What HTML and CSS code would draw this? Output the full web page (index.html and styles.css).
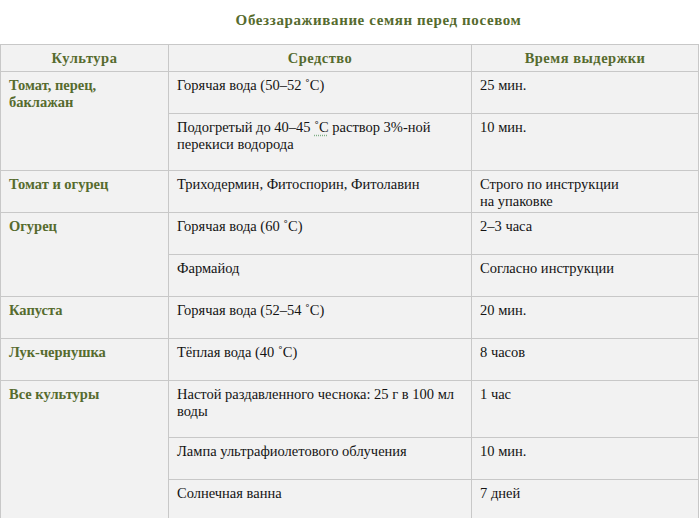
FILE: index.html
```html
<!DOCTYPE html>
<html lang="ru">
<head>
<meta charset="utf-8">
<title>Обеззараживание семян перед посевом</title>
<link rel="stylesheet" href="styles.css">
</head>
<body>
<h1 class="title">Обеззараживание семян перед посевом</h1>
<table class="tbl">
  <colgroup>
    <col class="c1"><col class="c2"><col class="c3">
  </colgroup>
  <thead>
    <tr><th>Культура</th><th>Средство</th><th>Время выдержки</th></tr>
  </thead>
  <tbody>
    <tr><td class="crop" rowspan="2">Томат, перец,<br>баклажан</td><td>Горячая вода (50–52 ˚С)</td><td>25 мин.</td></tr>
    <tr class="tall"><td>Подогретый до 40–45 <span class="spell">˚С</span> раствор 3%-ной<br>перекиси водорода</td><td>10 мин.</td></tr>
    <tr><td class="crop">Томат и огурец</td><td>Триходермин, Фитоспорин, Фитолавин</td><td>Строго по инструкции<br>на упаковке</td></tr>
    <tr><td class="crop" rowspan="2">Огурец</td><td>Горячая вода (60 ˚С)</td><td>2–3 часа</td></tr>
    <tr><td>Фармайод</td><td>Согласно инструкции</td></tr>
    <tr><td class="crop">Капуста</td><td>Горячая вода (52–54 ˚С)</td><td>20 мин.</td></tr>
    <tr><td class="crop">Лук-чернушка</td><td>Тёплая вода (40 ˚С)</td><td>8 часов</td></tr>
    <tr class="tall"><td class="crop" rowspan="3">Все культуры</td><td>Настой раздавленного чеснока: 25 г в 100 мл<br>воды</td><td>1 час</td></tr>
    <tr><td>Лампа ультрафиолетового облучения</td><td>10 мин.</td></tr>
    <tr><td>Солнечная ванна</td><td>7 дней</td></tr>
  </tbody>
</table>
</body>
</html>
```
FILE: styles.css
```css
html, body {
  margin: 0;
  padding: 0;
  background: #ffffff;
}
body {
  font-family: "Liberation Serif", "Times New Roman", serif;
  color: #141414;
  font-size: 14.5px;
}
.title {
  margin: 0;
  padding: 11px 0 0 58px;
  height: 44px;
  box-sizing: border-box;
  text-align: center;
  font-size: 15px;
  line-height: 18px;
  font-weight: bold;
  letter-spacing: 0.6px;
  color: #566b2e;
}
.tbl {
  width: 698px;
  border-collapse: collapse;
  table-layout: fixed;
  background: #f2f2f2;
  border-left: 1px solid #b8b8b8;
  border-top: 1px solid #c6c6c6;
}
.c1 { width: 168px; }
.c2 { width: 303px; }
.c3 { width: 227px; }
.tbl th, .tbl td {
  border: 1px solid #c8c8c8;
  vertical-align: top;
  text-align: left;
  line-height: 16.5px;
}
.tbl th {
  padding: 5px 8px 4px;
  height: 17px;
  text-align: center;
  font-weight: bold;
  color: #566b2e;
  letter-spacing: 0.5px;
}
.tbl td {
  padding: 5px 8px 3px;
  height: 33px;
}
.tbl tr.tall td {
  padding-bottom: 18px;
}
.tbl td.crop {
  font-weight: bold;
  color: #566b2e;
}
.tbl tr.tall td.crop {
  padding-bottom: 3px;
}
.spell {
  text-decoration: underline dotted #7fae86;
  text-underline-offset: 3px;
}
```
